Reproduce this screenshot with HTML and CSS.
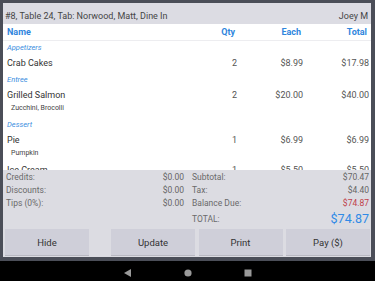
FILE: index.html
```html
<!DOCTYPE html>
<html>
<head>
<meta charset="utf-8">
<link rel="stylesheet" href="styles.css">
</head>
<body>
<div class="screen">
  <div class="app">
    <div class="topbar">
      <span>#8, Table 24, Tab: Norwood, Matt, Dine In</span>
      <span>Joey M</span>
    </div>
    <div class="list">
      <div class="row head">
        <div class="c-name">Name</div>
        <div class="c-num">Qty</div>
        <div class="c-num">Each</div>
        <div class="c-num">Total</div>
      </div>
      <div class="cat">Appetizers</div>
      <div class="row item">
        <div class="c-name">Crab Cakes</div>
        <div class="c-num">2</div>
        <div class="c-num">$8.99</div>
        <div class="c-num">$17.98</div>
      </div>
      <div class="cat">Entree</div>
      <div class="row item has-mod">
        <div class="c-name">Grilled Salmon<div class="mod">Zucchini, Brocolli</div></div>
        <div class="c-num">2</div>
        <div class="c-num">$20.00</div>
        <div class="c-num">$40.00</div>
      </div>
      <div class="cat">Dessert</div>
      <div class="row item has-mod">
        <div class="c-name">Pie<div class="mod">Pumpkin</div></div>
        <div class="c-num">1</div>
        <div class="c-num">$6.99</div>
        <div class="c-num">$6.99</div>
      </div>
      <div class="row item">
        <div class="c-name">Ice Cream</div>
        <div class="c-num">1</div>
        <div class="c-num">$5.50</div>
        <div class="c-num">$5.50</div>
      </div>
    </div>
    <div class="summary">
      <div class="totals">
        <div class="col">
          <div class="line"><span>Credits:</span><span>$0.00</span></div>
          <div class="line"><span>Discounts:</span><span>$0.00</span></div>
          <div class="line"><span>Tips (0%):</span><span>$0.00</span></div>
        </div>
        <div class="col">
          <div class="line"><span>Subtotal:</span><span>$70.47</span></div>
          <div class="line"><span>Tax:</span><span>$4.40</span></div>
          <div class="line"><span>Balance Due:</span><span class="red">$74.87</span></div>
          <div class="line total"><span>TOTAL:</span><span class="blue">$74.87</span></div>
        </div>
      </div>
      <div class="buttons">
        <div class="btn hide">Hide</div>
        <div class="btn">Update</div>
        <div class="btn">Print</div>
        <div class="btn">Pay ($)</div>
      </div>
    </div>
  </div>
  <div class="nav">
    <svg width="8" height="8" viewBox="0 0 8 8"><polygon points="7,0 7,8 0,4" fill="#9a9a9a"/></svg>
    <svg width="8" height="8" viewBox="0 0 8 8"><circle cx="4" cy="4" r="3.6" fill="#9a9a9a"/></svg>
    <svg width="8" height="8" viewBox="0 0 8 8"><rect x="0.5" y="0.5" width="7" height="7" fill="#9a9a9a"/></svg>
  </div>
</div>
</body>
</html>
```
FILE: styles.css
```css
html, body {
  margin: 0;
  padding: 0;
  background: #000;
}
body {
  font-family: Roboto, "Liberation Sans", sans-serif;
  width: 375px;
  height: 281px;
  overflow: hidden;
}
.screen {
  width: 375px;
  height: 281px;
  display: flex;
  flex-direction: column;
}
.app {
  background: #4b4e58;
  padding: 3px 4px 4px 3px;
  height: 254px;
  display: flex;
  flex-direction: column;
}
.topbar {
  height: 21px;
  box-sizing: border-box;
  padding: 4px 3px 0 2px;
  background: #dcdce3;
  display: flex;
  justify-content: space-between;
  align-items: center;
  font-size: 9px;
  color: #454545;
}
.list {
  height: 146px;
  overflow: hidden;
  background: #fff;
}
.row {
  display: grid;
  grid-template-columns: 1fr 66px 66px 66px;
  padding: 0 2px 0 4px;
}
.head {
  height: 16px;
  align-items: center;
  border-bottom: 1px solid #ededf0;
  color: #2f86dd;
  font-weight: bold;
  font-size: 9px;
}
.head .c-num {
  padding-right: 2px;
}
.c-num {
  text-align: right;
}
.cat {
  height: 14px;
  line-height: 14px;
  padding-left: 4px;
  font-size: 7.5px;
  font-style: italic;
  color: #3b8ee0;
}
.item {
  padding-top: 1px;
  padding-bottom: 3px;
  font-size: 9px;
  color: #333;
  line-height: 14px;
}
.item .c-num {
  color: #555;
}
.mod {
  font-size: 7px;
  line-height: 12px;
  margin-top: 0;
  margin-bottom: 0.5px;
  padding-left: 4px;
  color: #444;
}
.summary {
  background: #dcdce2;
  flex: 1;
  display: flex;
  flex-direction: column;
}
.totals {
  height: 59px;
  box-sizing: border-box;
  padding: 0.5px 2px 0 3px;
  display: grid;
  grid-template-columns: 178px 1fr;
  column-gap: 8px;
  font-size: 8.5px;
  color: #6a6a6a;
}
.line {
  display: flex;
  justify-content: space-between;
  line-height: 13px;
}
.line span:last-child {
  color: #666;
}
.line .red {
  color: #c0414b !important;
}
.line.total {
  line-height: 16px;
  margin-top: 1px;
  align-items: center;
}
.line .blue {
  color: #2f8ae6 !important;
  font-size: 12.5px;
}
.buttons {
  display: flex;
  padding-left: 2px;
  gap: 3.5px;
}
.btn {
  width: 84px;
  height: 27px;
  box-sizing: border-box;
  background: #cfcfd9;
  border-bottom: 1.5px solid #b9b9c2;
  display: flex;
  align-items: center;
  justify-content: center;
  font-size: 9.5px;
  color: #333;
}
.btn.hide {
  margin-right: 18.5px;
}
.nav {
  height: 20px;
  background: #000;
  display: flex;
  align-items: center;
  justify-content: center;
  gap: 52px;
  padding-top: 4px;
  box-sizing: border-box;
}
```
